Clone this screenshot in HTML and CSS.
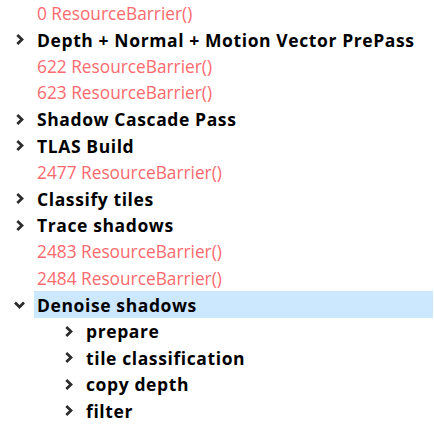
FILE: index.html
```html
<!DOCTYPE html>
<html>
<head>
<meta charset="utf-8">
<link rel="stylesheet" href="styles.css">
</head>
<body>
<ul class="tree">
  <li class="row leaf"><span class="twisty"></span><span class="label call">0 ResourceBarrier()</span></li>
  <li class="row"><span class="twisty"><svg class="chev" width="10" height="11" viewBox="0 0 10 11"><path d="M2.3 1 L7 5.5 L2.3 10"/></svg></span><span class="label pass">Depth + Normal + Motion Vector PrePass</span></li>
  <li class="row leaf"><span class="twisty"></span><span class="label call">622 ResourceBarrier()</span></li>
  <li class="row leaf"><span class="twisty"></span><span class="label call">623 ResourceBarrier()</span></li>
  <li class="row"><span class="twisty"><svg class="chev" width="10" height="11" viewBox="0 0 10 11"><path d="M2.3 1 L7 5.5 L2.3 10"/></svg></span><span class="label pass">Shadow Cascade Pass</span></li>
  <li class="row"><span class="twisty"><svg class="chev" width="10" height="11" viewBox="0 0 10 11"><path d="M2.3 1 L7 5.5 L2.3 10"/></svg></span><span class="label pass">TLAS Build</span></li>
  <li class="row leaf"><span class="twisty"></span><span class="label call">2477 ResourceBarrier()</span></li>
  <li class="row"><span class="twisty"><svg class="chev" width="10" height="11" viewBox="0 0 10 11"><path d="M2.3 1 L7 5.5 L2.3 10"/></svg></span><span class="label pass">Classify tiles</span></li>
  <li class="row"><span class="twisty"><svg class="chev" width="10" height="11" viewBox="0 0 10 11"><path d="M2.3 1 L7 5.5 L2.3 10"/></svg></span><span class="label pass">Trace shadows</span></li>
  <li class="row leaf"><span class="twisty"></span><span class="label call">2483 ResourceBarrier()</span></li>
  <li class="row leaf"><span class="twisty"></span><span class="label call">2484 ResourceBarrier()</span></li>
  <li class="row selected"><span class="twisty"><svg class="chev down" width="11" height="10" viewBox="0 0 11 10"><path d="M1 2.5 L5.5 7 L10 2.5"/></svg></span><span class="label pass">Denoise shadows</span></li>
  <li class="row child"><span class="twisty"><svg class="chev" width="10" height="11" viewBox="0 0 10 11"><path d="M2.3 1 L7 5.5 L2.3 10"/></svg></span><span class="label pass">prepare</span></li>
  <li class="row child"><span class="twisty"><svg class="chev" width="10" height="11" viewBox="0 0 10 11"><path d="M2.3 1 L7 5.5 L2.3 10"/></svg></span><span class="label pass">tile classification</span></li>
  <li class="row child"><span class="twisty"><svg class="chev" width="10" height="11" viewBox="0 0 10 11"><path d="M2.3 1 L7 5.5 L2.3 10"/></svg></span><span class="label pass">copy depth</span></li>
  <li class="row child"><span class="twisty"><svg class="chev" width="10" height="11" viewBox="0 0 10 11"><path d="M2.3 1 L7 5.5 L2.3 10"/></svg></span><span class="label pass">filter</span></li>
</ul>
</body>
</html>
```
FILE: styles.css
```css
html, body {
  margin: 0;
  padding: 0;
  background: #ffffff;
}
body {
  font-family: "Open Sans", "Noto Sans", sans-serif;
  font-size: 17px;
  overflow: hidden;
}
.tree {
  list-style: none;
  margin: 0;
  padding: 0;
}
.row {
  display: flex;
  align-items: stretch;
  height: 26px;
  padding-left: 12px;
}
.row:nth-child(even) {
  height: 27px;
}
.row.child {
  padding-left: 61px;
}
.twisty {
  width: 25px;
  flex: none;
  box-sizing: border-box;
  padding-top: 8px;
  padding-left: 3px;
}
.chev {
  display: block;
  fill: none;
  stroke: #2b2b2b;
  stroke-width: 2.7;
}
.chev.down {
  margin-top: 1px;
  margin-left: -1px;
}
.label {
  white-space: nowrap;
  display: flex;
  align-items: center;
}
.call {
  color: #fb6a6e;
  font-weight: 400;
  font-size: 17.3px;
}
.pass {
  color: #000000;
  font-weight: 700;
  font-size: 17.5px;
  letter-spacing: 0.6px;
}
.selected .label {
  background: #cce8ff;
  flex: 1;
  margin-left: -3px;
  padding-left: 3px;
  margin-right: 1px;
}
```
